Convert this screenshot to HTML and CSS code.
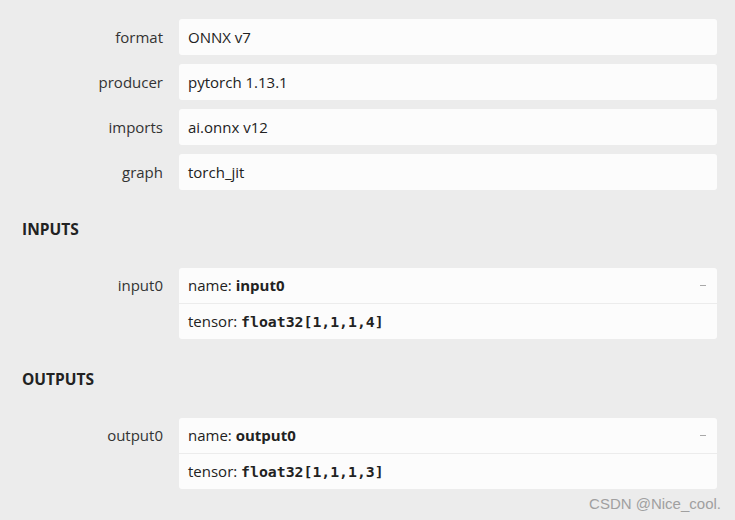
FILE: index.html
```html
<!DOCTYPE html>
<html>
<head>
<meta charset="utf-8">
<link rel="stylesheet" href="styles.css">
</head>
<body>
<div class="page">
  <div class="props">
    <div class="row"><div class="label">format</div><div class="value">ONNX v7</div></div>
    <div class="row"><div class="label">producer</div><div class="value">pytorch 1.13.1</div></div>
    <div class="row"><div class="label">imports</div><div class="value">ai.onnx v12</div></div>
    <div class="row"><div class="label">graph</div><div class="value">torch_jit</div></div>
  </div>

  <h2 class="section">INPUTS</h2>
  <div class="row">
    <div class="label arg">input0</div>
    <div class="card">
      <div class="card-line first"><span>name: <b>input0</b></span><span class="toggle"></span></div>
      <div class="card-line">tensor:&nbsp;<code>float32[1,1,1,4]</code></div>
    </div>
  </div>

  <h2 class="section second">OUTPUTS</h2>
  <div class="row">
    <div class="label arg">output0</div>
    <div class="card">
      <div class="card-line first"><span>name: <b>output0</b></span><span class="toggle"></span></div>
      <div class="card-line">tensor:&nbsp;<code>float32[1,1,1,3]</code></div>
    </div>
  </div>
</div>
<div class="watermark">CSDN @Nice_cool.</div>
</body>
</html>
```
FILE: styles.css
```css
html, body {
  margin: 0;
  padding: 0;
  background: #ececec;
  height: 100%;
}
body {
  font-family: "Open Sans", "Noto Sans", sans-serif;
  font-size: 15px;
  color: #222;
  position: relative;
  overflow: hidden;
}
.page {
  padding: 19px 18px 0 22px;
}
.props {
  display: flex;
  flex-direction: column;
  gap: 9px;
}
.row {
  display: grid;
  grid-template-columns: 141px 1fr;
  column-gap: 16px;
  align-items: start;
}
.label {
  text-align: right;
  color: #333;
  height: 36px;
  line-height: 36px;
}
.label.arg {
  height: 35px;
  line-height: 35px;
}
.value {
  background: #fcfcfc;
  border-radius: 3px;
  height: 36px;
  line-height: 36px;
  padding: 0 9px;
}
.section {
  margin: 29px 0;
  font-size: 15.5px;
  line-height: 20px;
  font-weight: 700;
  color: #222;
}
.section.second {
  margin: 30px 0 29px;
}
.card {
  background: #fcfcfc;
  border-radius: 3px;
}
.card-line {
  height: 35px;
  line-height: 35px;
  padding: 0 11px 0 9px;
  display: flex;
  align-items: center;
}
.card-line.first {
  justify-content: space-between;
  border-bottom: 1px solid #ececec;
}
.card-line b {
  font-weight: 700;
}
.toggle {
  width: 6px;
  height: 1px;
  background: #a8a8a8;
}
code {
  font-family: "DejaVu Sans Mono", "Liberation Mono", monospace;
  font-weight: 700;
  font-size: 14.8px;
}
.watermark {
  position: absolute;
  right: 14px;
  bottom: 8px;
  font-family: "Liberation Sans", Arial, sans-serif;
  font-size: 15px;
  color: #a0a0a0;
}
```
